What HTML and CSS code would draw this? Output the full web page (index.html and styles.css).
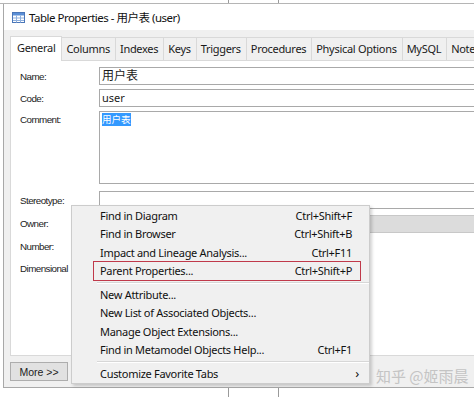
FILE: index.html
```html
<!DOCTYPE html>
<html lang="zh-CN">
<head>
  <meta charset="UTF-8">
  <meta name="viewport" content="width=device-width, initial-scale=1.0">
  <title>Table Properties</title>
  <link rel="stylesheet" href="styles.css">
</head>
<body>
  <div class="backdrop-top"><span class="cell"></span></div>

  <div class="dialog">
    <div class="titlebar">
      <svg class="table-icon" width="13" height="11" viewBox="0 0 13 11">
        <rect x="0.5" y="0.5" width="12" height="10" fill="#fff" stroke="#4a76b8"/>
        <rect x="1" y="1" width="11" height="2.5" fill="#5b8fd6"/>
        <path d="M1 6h11M1 8.5h11M4.5 3.5v7M8.5 3.5v7" stroke="#8fb0de" stroke-width="1"/>
      </svg>
      <span class="title">Table Properties - 用户表 (user)</span>
    </div>

    <div class="dialog-body">
      <div class="tabs">
        <div class="tab active">General</div>
        <div class="tab">Columns</div>
        <div class="tab">Indexes</div>
        <div class="tab">Keys</div>
        <div class="tab">Triggers</div>
        <div class="tab">Procedures</div>
        <div class="tab">Physical Options</div>
        <div class="tab">MySQL</div>
        <div class="tab">Notes</div>
      </div>

      <div class="panel">
        <div class="form">
          <label class="lbl">Name:</label>
          <div class="field cjk">用户表</div>

          <label class="lbl">Code:</label>
          <div class="field">user</div>

          <label class="lbl top">Comment:</label>
          <div class="field area"><span class="selected">用户表</span></div>

          <label class="lbl gap-top">Stereotype:</label>
          <div class="field gap-top"></div>

          <label class="lbl">Owner:</label>
          <div class="field disabled"></div>

          <label class="lbl">Number:</label>
          <div class="field blank"></div>

          <label class="lbl">Dimensional</label>
          <div class="field blank"></div>
        </div>
      </div>

      <div class="footer">
        <button class="more-btn">More &gt;&gt;</button>
      </div>
    </div>
  </div>

  <div class="backdrop-bottom"><span class="cell"></span></div>

  <div class="menu">
    <div class="item"><span>Find in Diagram</span><span class="key">Ctrl+Shift+F</span></div>
    <div class="item"><span>Find in Browser</span><span class="key">Ctrl+Shift+B</span></div>
    <div class="item"><span>Impact and Lineage Analysis...</span><span class="key">Ctrl+F11</span></div>
    <div class="item marked"><span>Parent Properties...</span><span class="key">Ctrl+Shift+P</span></div>
    <div class="sep"></div>
    <div class="item"><span>New Attribute...</span></div>
    <div class="item"><span>New List of Associated Objects...</span></div>
    <div class="item"><span>Manage Object Extensions...</span></div>
    <div class="item"><span>Find in Metamodel Objects Help...</span><span class="key">Ctrl+F1</span></div>
    <div class="sep"></div>
    <div class="item"><span>Customize Favorite Tabs</span><span class="arrow">›</span></div>
  </div>

  <div class="watermark">知乎 @姬雨晨</div>
</body>
</html>
```

FILE: styles.css
```css
:root {
  --face: #f0f0f0;
  --line: #d9d9d9;
  --field-border: #a9a9a9;
  --text: #1a1a1a;
  --ui-font: "Noto Sans", "Noto Sans CJK SC", sans-serif;
}

html, body {
  margin: 0;
  width: 474px;
  height: 397px;
  overflow: hidden;
  background: #fff;
  font-family: var(--ui-font);
  color: var(--text);
}

body {
  position: relative;
}

.backdrop-top {
  height: 3px;
  border-bottom: 1px solid #b5b5b5;
}

.backdrop-top .cell,
.backdrop-bottom .cell {
  display: block;
  margin-left: 228px;
  width: 49px;
  height: 100%;
  border-left: 1px solid #9a9a9a;
  border-right: 1px solid #9a9a9a;
}

.backdrop-bottom {
  height: 10px;
}

.dialog {
  margin-left: 3px;
  width: 540px;
  border-left: 1px solid #a8a8a8;
  border-bottom: 1px solid #a8a8a8;
}

.titlebar {
  height: 26px;
  display: flex;
  align-items: center;
  gap: 4px;
  padding-left: 8px;
  background: #fff;
}

.table-icon {
  flex: none;
}

.title {
  font-size: 11.5px;
  letter-spacing: -0.5px;
  color: #111;
}

.dialog-body {
  background: var(--face);
  padding: 6px 0 6px 6px;
}

/* tab strip */
.tabs {
  display: flex;
  align-items: flex-end;
  height: 24px;
  border-bottom: 1px solid var(--line);
}

.tab {
  height: 22px;
  padding: 0 5px 0 4px;
  font-size: 11px;
  letter-spacing: -0.3px;
  line-height: 22px;
  border: 1px solid var(--line);
  border-bottom: none;
  margin-right: -1px;
  white-space: nowrap;
  background: var(--face);
}

.tab.active {
  height: 24px;
  line-height: 22px;
  background: #fff;
  padding: 0 6px;
  margin-bottom: -1px;
  position: relative;
}

.panel {
  background: #fff;
  border: 1px solid var(--line);
  border-top: none;
  height: 288px;
  padding: 6px 0 0 9px;
}

.form {
  display: grid;
  grid-template-columns: 79px 1fr;
  row-gap: 4px;
  align-items: center;
}

.lbl {
  font-family: "Liberation Sans", sans-serif;
  font-size: 9.8px;
  letter-spacing: -0.55px;
  color: #222;
  white-space: nowrap;
}

.lbl.top {
  align-self: start;
  padding-top: 3px;
}

.field {
  height: 18px;
  box-sizing: border-box;
  border: 1px solid var(--field-border);
  background: #fff;
  font-size: 11px;
  line-height: 16px;
  padding-left: 2px;
}

.field.cjk {
  font-size: 12px;
}

.field.area {
  height: 73px;
  line-height: 12px;
  padding-top: 2px;
  font-size: 9.5px;
}

.selected {
  background: #3399ff;
  color: #fff;
}

.gap-top {
  margin-top: 3px;
}

.field.disabled {
  background: #dcdcdc;
  border-color: #c8c8c8;
  margin-top: 2px;
}

.field.blank {
  border: none;
  background: transparent;
}

.footer {
  padding-top: 6px;
  height: 19px;
}

.more-btn {
  display: block;
  width: 58px;
  height: 19px;
  padding: 0;
  font-family: "Liberation Sans", sans-serif;
  font-size: 10.5px;
  color: #222;
  background: #e1e1e1;
  border: 1px solid #adadad;
}

/* popup menu over the dialog */
.menu {
  position: absolute;
  left: 71px;
  top: 205px;
  width: 297px;
  background: #f0f0f0;
  border: 1px solid #cccccc;
  box-shadow: 2px 2px 3px rgba(0, 0, 0, 0.18);
  font-size: 11px;
  letter-spacing: -0.3px;
}

.item {
  display: flex;
  justify-content: space-between;
  align-items: center;
  height: 18.5px;
  padding: 0 17px 0 28px;
  white-space: nowrap;
  color: #111;
}

.item.marked {
  height: 20px;
  margin: -1px 8px -0.5px 21px;
  padding: 0 8px 0 6px;
  border: 1.5px solid #c0394a;
  box-sizing: border-box;
}

.arrow {
  font-size: 13px;
  margin-right: -7px;
}

.sep {
  height: 1px;
  margin: 2px 0 1px 25px;
  background: #d7d7d7;
  border-bottom: 1px solid #fff;
}

.watermark {
  position: absolute;
  left: 376px;
  top: 365px;
  font-family: "Noto Sans CJK SC", sans-serif;
  font-size: 15px;
  color: #c4c4c4;
  white-space: nowrap;
}
```
